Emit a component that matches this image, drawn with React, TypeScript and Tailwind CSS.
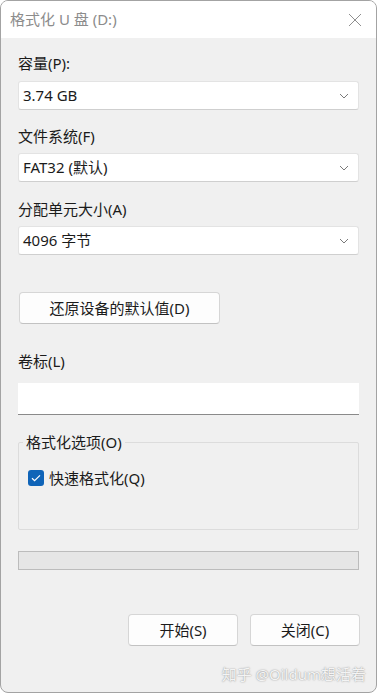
import React from "react";

const Chevron: React.FC = () => (
  <svg width="10" height="6" viewBox="0 0 10 6" className="text-[#7a7a7a]">
    <path d="M1 1l4 4 4-4" fill="none" stroke="currentColor" strokeWidth="1" />
  </svg>
);

const Select: React.FC<{ value: string }> = ({ value }) => (
  <div className="mx-[17px] h-[29px] flex items-center justify-between bg-white border border-[#e3e3e3] border-b-[#cfcfcf] rounded-[3px] pl-[4px] pr-[9px] text-[15px] text-[#1b1b1b]">
    <span>{value}</span>
    <Chevron />
  </div>
);

const Button: React.FC<{ label: string; className?: string }> = ({ label, className }) => (
  <div
    className={
      "h-[32px] flex items-center justify-center bg-[#fdfdfd] border border-[#d6d6d6] border-b-[#c2c2c2] rounded-[4px] text-[15px] text-[#1b1b1b] " +
      (className || "")
    }
  >
    {label}
  </div>
);

const App: React.FC = () => {
  return (
    <div className="w-[378px] h-[694px] bg-white font-['Noto_Sans','Noto_Sans_CJK_SC',sans-serif]">
      <div className="w-[377px] h-[693px] flex flex-col border border-[#a3a3a3] rounded-[8px] overflow-hidden bg-[#f0f0f0]">
        {/* Title bar */}
        <div className="h-[37px] shrink-0 bg-white flex items-center justify-between pl-[9px] pr-[14px]">
          <span className="text-[15px] text-[#8c8c8c]">格式化 U 盘 (D:)</span>
          <svg width="14" height="14" viewBox="0 0 14 14" className="text-[#8f8f8f]">
            <path d="M1 1l12 12M13 1L1 13" stroke="currentColor" strokeWidth="1" fill="none" />
          </svg>
        </div>

        <div className="h-[20px] mt-[15px] mx-[17px] flex items-center text-[15px] text-[#1b1b1b]">容量(P):</div>
        <div className="mt-[8px]">
          <Select value="3.74 GB" />
        </div>

        <div className="h-[20px] mt-[16px] mx-[17px] flex items-center text-[15px] text-[#1b1b1b]">文件系统(F)</div>
        <div className="mt-[7px]">
          <Select value="FAT32 (默认)" />
        </div>

        <div className="h-[20px] mt-[17px] mx-[17px] flex items-center text-[15px] text-[#1b1b1b]">分配单元大小(A)</div>
        <div className="mt-[7px]">
          <Select value="4096 字节" />
        </div>

        <div className="mt-[37px] ml-[18px]">
          <Button label="还原设备的默认值(D)" className="w-[201px]" />
        </div>

        <div className="h-[20px] mt-[27px] mx-[17px] flex items-center text-[15px] text-[#1b1b1b]">卷标(L)</div>
        <div className="mt-[12px] mx-[17px] h-[32px] bg-white border-b border-[#8a8a8a]" />

        {/* Options group */}
        <div className="relative mt-[27px] mx-[17px] h-[88px] border border-[#dcdcdc] rounded-[2px]">
          <span className="absolute left-[4px] -top-[11px] px-[3px] bg-[#f0f0f0] text-[15px] text-[#1b1b1b] leading-[20px]">
            格式化选项(O)
          </span>
          <div className="flex items-center mt-[24px] ml-[9px] gap-[5px]">
            <div className="w-[16px] h-[16px] rounded-[3px] bg-[#0f64b8] flex items-center justify-center">
              <svg width="10" height="8" viewBox="0 0 10 8">
                <path d="M1 4.2l2.6 2.5L9 1.3" fill="none" stroke="white" strokeWidth="1.2" />
              </svg>
            </div>
            <span className="text-[15px] text-[#1b1b1b]">快速格式化(Q)</span>
          </div>
        </div>

        {/* Progress */}
        <div className="mt-[21px] mx-[17px] h-[19px] bg-[#e6e6e6] border border-[#bcbcbc]" />

        <div className="flex justify-end gap-[12px] mt-[44px] mr-[16px]">
          <Button label="开始(S)" className="w-[110px]" />
          <Button label="关闭(C)" className="w-[110px]" />
        </div>

        <div className="flex justify-end mt-[17px] mr-[10px]">
          <span className="text-[15px] text-[#f4f4f4] [text-shadow:0_0_1.5px_#7c7c7c]">知乎 @Oildum想活着</span>
        </div>
      </div>
    </div>
  );
};

export default App;
